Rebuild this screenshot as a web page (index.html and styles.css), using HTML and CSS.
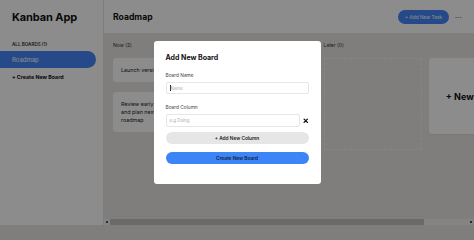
FILE: index.html
```html
<!DOCTYPE html>
<html lang="en">
<head>
<meta charset="utf-8">
<title>Kanban App</title>
<link rel="stylesheet" href="styles.css">
</head>
<body>
<div class="screen">
  <div class="app">
    <aside class="sidebar">
      <div class="logo">Kanban App</div>
      <div class="boards-title">ALL BOARDS (1)</div>
      <div class="board-item active">Roadmap</div>
      <div class="create-board">+ Create New Board</div>
    </aside>
    <div class="main">
      <header class="topbar">
        <h1 class="board-name">Roadmap</h1>
        <div class="actions">
          <button class="add-task">+ Add New Task</button>
          <span class="more">&middot;&middot;&middot;</span>
        </div>
      </header>
      <div class="board">
        <section class="column">
          <div class="column-title">Now (2)</div>
          <div class="cards">
            <div class="card">Launch version one</div>
            <div class="card">Review early feedback<br>and plan next release<br>roadmap</div>
          </div>
        </section>
        <section class="column">
          <div class="column-title">Next (0)</div>
          <div class="empty"></div>
        </section>
        <section class="column">
          <div class="column-title">Later (0)</div>
          <div class="empty"></div>
        </section>
        <section class="column">
          <div class="column-title">&nbsp;</div>
          <div class="new-column">+ New Column</div>
        </section>
      </div>
      <div class="scrollbar">
        <span class="sb-btn"></span>
        <div class="sb-track"><div class="sb-thumb"></div></div>
        <span class="sb-btn"></span>
      </div>
    </div>
  </div>

  <div class="overlay">
    <div class="modal">
      <h2 class="modal-title">Add New Board</h2>
      <label class="field-label">Board Name</label>
      <div class="input focused"><span class="caret"></span><span class="placeholder">Name</span></div>
      <label class="field-label">Board Column</label>
      <div class="input-row">
        <div class="input"><span class="placeholder">e.g Doing</span></div>
        <svg class="remove" viewBox="0 0 10 10" width="6" height="6"><path d="M2 2 L8 8 M8 2 L2 8" stroke="#111" stroke-width="2.4" stroke-linecap="round"/></svg>
      </div>
      <button class="btn-secondary">+ Add New Column</button>
      <button class="btn-primary">Create New Board</button>
    </div>
  </div>
</div>
</body>
</html>
```

FILE: styles.css
```css
* { box-sizing: border-box; }
html, body {
  margin: 0;
  font-family: Inter, "Noto Sans", "DejaVu Sans", sans-serif;
  color: #111;
  background: #7f7e7c;
}
.screen {
  position: relative;
  width: 474px;
  height: 225px;
  overflow: hidden;
}
.app {
  display: flex;
  height: 225px;
}
.sidebar {
  width: 104px;
  flex: none;
  background: #fff;
  border-right: 1px solid #e2e2e2;
}
.logo {
  height: 33px;
  display: flex;
  align-items: center;
  padding-left: 12px;
  font-size: 11px;
  font-weight: 700;
  letter-spacing: -0.1px;
}
.boards-title {
  margin-top: 9px;
  padding-left: 12px;
  font-size: 4.6px;
  line-height: 6px;
  font-weight: 600;
  color: #333;
}
.board-item {
  margin-top: 3px;
  width: 96px;
  height: 17px;
  display: flex;
  align-items: center;
  padding-left: 12px;
  font-size: 6px;
  color: #fff;
  background: #4688fa;
  border-radius: 0 9px 9px 0;
}
.create-board {
  margin-top: 5px;
  padding-left: 12px;
  font-size: 5.3px;
  line-height: 8px;
  font-weight: 700;
}
.main {
  flex: 1;
  min-width: 0;
  display: flex;
  flex-direction: column;
}
.topbar {
  height: 33px;
  flex: none;
  display: flex;
  align-items: center;
  justify-content: space-between;
  padding: 0 12px 0 9px;
  background: #fff;
}
.board-name {
  margin: 0;
  font-size: 8.6px;
  font-weight: 700;
}
.actions {
  display: flex;
  align-items: center;
  gap: 6px;
}
.add-task {
  width: 51px;
  height: 14px;
  border: 0;
  border-radius: 7px;
  padding: 0;
  background: #4688fa;
  color: #fff;
  font-family: inherit;
  font-size: 4.8px;
}
.more {
  font-size: 7px;
  letter-spacing: 0.3px;
  color: #333;
  margin-top: 1px;
}
.board {
  flex: 1;
  min-height: 0;
  display: flex;
  gap: 7.3px;
  padding: 8.5px 0 0 9px;
  background: #e8e6e2;
  overflow: hidden;
}
.column {
  width: 98px;
  flex: none;
}
.column-title {
  font-size: 5px;
  line-height: 7px;
  color: #333;
}
.cards {
  margin-top: 9.5px;
  display: flex;
  flex-direction: column;
  gap: 10px;
}
.card {
  background: #fff;
  border-radius: 3px;
  padding: 8px;
  font-size: 5.4px;
  line-height: 8px;
  color: #222;
  white-space: nowrap;
  overflow: hidden;
}
.empty {
  margin-top: 9.5px;
  height: 92px;
  border: 1.2px dashed #f4f4f4;
  border-radius: 1px;
}
.new-column {
  margin-top: 9.5px;
  height: 76px;
  background: #fff;
  border-radius: 3px;
  display: flex;
  align-items: center;
  justify-content: center;
  font-size: 9px;
  font-weight: 700;
  color: #111;
  box-shadow: 0 1px 2px rgba(0,0,0,0.06);
}
.scrollbar {
  height: 6px;
  flex: none;
  display: flex;
  align-items: center;
  background: #f1f1f1;
  padding: 0 2px;
}
.sb-btn {
  width: 2px;
  height: 2px;
  background: #505050;
  flex: none;
}
.sb-track {
  flex: 1;
  height: 6px;
  padding: 0 2px;
}
.sb-thumb {
  width: 314px;
  height: 6px;
  background: #c1c1c1;
}
.overlay {
  position: absolute;
  inset: 0;
  background: rgba(0, 0, 0, 0.45);
  display: flex;
  align-items: center;
  justify-content: center;
}
.modal {
  width: 167px;
  height: 143px;
  background: #fff;
  border-radius: 3px;
  padding: 11.5px 12px 0;
  display: flex;
  flex-direction: column;
}
.modal-title {
  margin: 0;
  font-size: 7px;
  line-height: 9px;
  font-weight: 700;
}
.field-label {
  margin-top: 10.5px;
  font-size: 4.8px;
  line-height: 7px;
  color: #444;
}
.input {
  margin-top: 3px;
  height: 12px;
  border: 0.6px solid #e6e6e6;
  border-radius: 2px;
  display: flex;
  align-items: center;
  padding-left: 3px;
}
.input-row {
  margin-top: 3px;
  display: flex;
  align-items: center;
  gap: 3.5px;
}
.input-row .input {
  flex: 1;
  height: 13px;
  margin-top: 0;
}
.input.focused + .field-label { margin-top: 10px; }
.caret {
  width: 0.6px;
  height: 6px;
  background: #222;
  margin-right: 0.5px;
}
.placeholder {
  font-size: 4.4px;
  color: #aaa;
}
.remove {
  width: 5.5px;
  height: 5.5px;
  flex: none;
}
.btn-secondary, .btn-primary {
  height: 12px;
  border: 0;
  border-radius: 6px;
  padding: 0;
  font-family: inherit;
  font-size: 4.8px;
  font-weight: 600;
  color: #1a1a2a;
}
.btn-secondary {
  margin-top: 4.5px;
  background: #e6e6e6;
}
.btn-primary {
  margin-top: 8.5px;
  background: #3d85f6;
  color: #13213f;
}
```
